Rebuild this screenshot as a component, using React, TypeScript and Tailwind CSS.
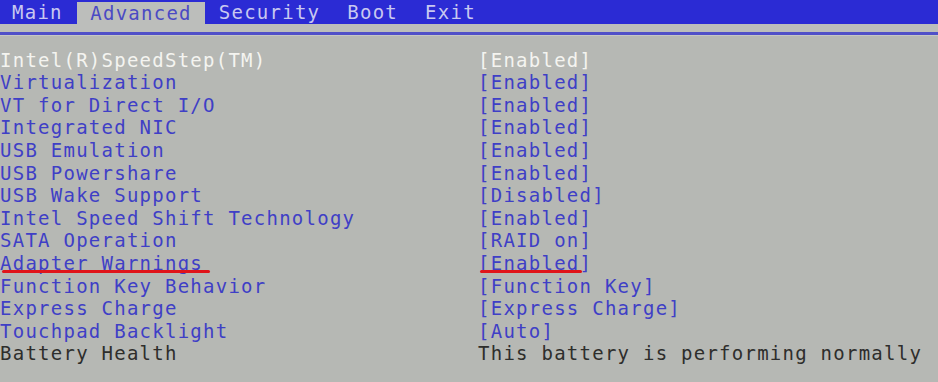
import React from "react";

const rows: { label: string; value: string; kind: "sel" | "blue" | "dark"; mark?: boolean }[] = [
  { label: "Intel(R)SpeedStep(TM)", value: "[Enabled]", kind: "sel" },
  { label: "Virtualization", value: "[Enabled]", kind: "blue" },
  { label: "VT for Direct I/O", value: "[Enabled]", kind: "blue" },
  { label: "Integrated NIC", value: "[Enabled]", kind: "blue" },
  { label: "USB Emulation", value: "[Enabled]", kind: "blue" },
  { label: "USB Powershare", value: "[Enabled]", kind: "blue" },
  { label: "USB Wake Support", value: "[Disabled]", kind: "blue" },
  { label: "Intel Speed Shift Technology", value: "[Enabled]", kind: "blue" },
  { label: "SATA Operation", value: "[RAID on]", kind: "blue" },
  { label: "Adapter Warnings", value: "[Enabled]", kind: "blue", mark: true },
  { label: "Function Key Behavior", value: "[Function Key]", kind: "blue" },
  { label: "Express Charge", value: "[Express Charge]", kind: "blue" },
  { label: "Touchpad Backlight", value: "[Auto]", kind: "blue" },
  { label: "Battery Health", value: "This battery is performing normally", kind: "dark" },
];

const tabs = ["Main", "Advanced", "Security", "Boot", "Exit"];

export default function App() {
  const color = (k: string) =>
    k === "sel" ? "text-[#f4f4f0]" : k === "dark" ? "text-[#2e2e2c]" : "text-[#3f3fc6]";
  return (
    <div
      className="w-[938px] h-[382px] overflow-hidden bg-[#b6b8b4] text-[19px] tracking-[1.25px]"
      style={{ fontFamily: '"DejaVu Sans Mono", "Liberation Mono", monospace' }}
    >
      <div className="h-[24px] bg-[#2b2bd4] flex items-end pr-[2px]">
        {tabs.map((t, i) => (
          <div
            key={t}
            className={
              (i === 1
                ? "bg-[#bcbebb] text-[#4a4ac4] h-[22px] "
                : "text-[#c8c8f0] h-[24px] ") +
              (i === 0 ? "pl-[12px] pr-[14px] " : "px-[13.5px] ") +
              "flex items-center leading-none"
            }
          >
            {t}
          </div>
        ))}
      </div>
      <div className="h-[8px] bg-[#bcbebb]" />
      <div className="h-[3px] bg-[#5050c8]" />
      <div className="h-[1px] bg-[#c6c8c4]" />
      <div className="pt-[12.7px]">
        {rows.map((r) => (
          <div key={r.label} className={"grid grid-cols-[478px_1fr] h-[22.6px] leading-[22.6px] " + color(r.kind)}>
            <div className="relative whitespace-nowrap">
              {r.label}
              {r.mark && (
                <span className="absolute left-[2px] top-[18px] w-[208px] h-[3px] rounded-full bg-[#e0141a]" />
              )}
            </div>
            <div className="relative whitespace-nowrap">
              {r.value}
              {r.mark && (
                <span className="absolute left-[2px] top-[18px] w-[102px] h-[3px] rounded-full bg-[#e0141a]" />
              )}
            </div>
          </div>
        ))}
      </div>
    </div>
  );
}
